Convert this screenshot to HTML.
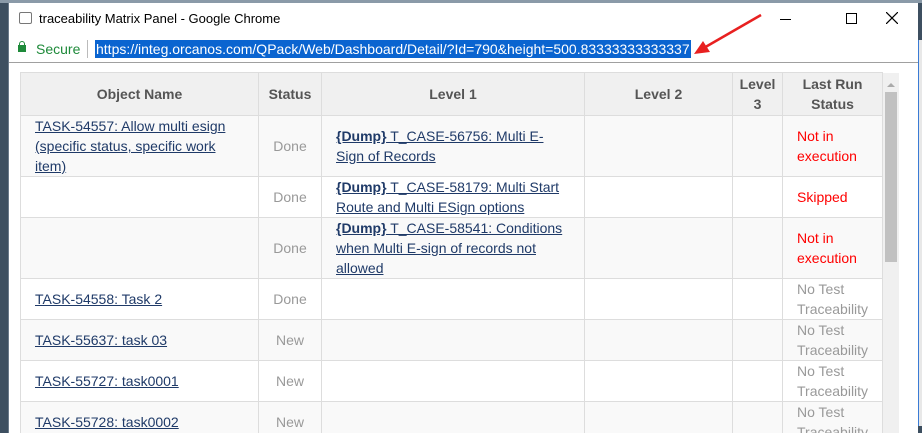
<!DOCTYPE html>
<html><head><style>
*{margin:0;padding:0;box-sizing:border-box}
body{width:922px;height:426px;overflow:hidden;background:#3d4f60;font-family:"Liberation Sans",Arial,sans-serif;position:relative}
.win{position:absolute;left:8px;top:3px;width:910px;height:430px;background:#fff;border-left:1px solid #6a7a8a;overflow:hidden}
.title{position:absolute;left:0;top:0;width:910px;height:32px;background:#fff;font-size:13px;color:#000}
.addr{position:absolute;left:0;top:32px;width:910px;height:28px;border-bottom:1px solid #a0a0a0;font-size:14px}
table{position:absolute;left:11px;top:69px;border-collapse:collapse;font-size:14px;table-layout:fixed}
td,th{border:1px solid #ddd;padding:0 14px;line-height:20px;vertical-align:middle}
th{background:#f0f0f0;color:#555;font-weight:bold;text-align:center;height:43px}
td.s{color:#999;text-align:center;padding:0}
a{color:#1f3a68;text-decoration:underline}
.r{color:#f00}.g{color:#999}
tr.o td{background:#f9f9f9}
</style></head><body>
<div style="position:absolute;left:0;top:0;width:922px;height:3px;background:#8a9aa8"></div>
<div style="position:absolute;left:918px;top:40px;width:4px;height:386px;background:#e8e8e8;border-left:1px solid #3a7bd5"></div>
<div class="win">
<div class="title">
<div style="position:absolute;left:10px;top:9px;width:13px;height:12px;border:1.5px solid #777;border-radius:2px"></div>
<div style="position:absolute;left:30px;top:8px">traceability Matrix Panel - Google Chrome</div>
<div style="position:absolute;left:771px;top:16px;width:11px;height:1px;background:#000"></div>
<div style="position:absolute;left:837px;top:10px;width:11px;height:11px;border:1px solid #000"></div>
<svg style="position:absolute;left:877px;top:9px" width="12" height="12"><path d="M0 0L12 12M12 0L0 12" stroke="#000" stroke-width="1.2"/></svg>
</div>
<div class="addr">
<div style="position:absolute;left:9px;top:10px;width:8px;height:7px;background:#1e8a3a"></div>
<div style="position:absolute;left:10px;top:6px;width:6px;height:6px;border:1.5px solid #1e8a3a;border-bottom:none;border-radius:3px 3px 0 0"></div>
<div style="position:absolute;left:27px;top:6px;color:#1e8a3a">Secure</div>
<div style="position:absolute;left:78px;top:5px;width:1px;height:18px;background:#bbb"></div>
<div style="position:absolute;left:86px;top:5px;background:#0a64d0;color:#fff;line-height:18px;padding:0 1px">https://integ.orcanos.com/QPack/Web/Dashboard/Detail/?Id=790&amp;height=500.83333333333337</div>
</div>
<div style="position:absolute;left:874px;top:70px;width:16px;height:360px;background:#f0f0f0"></div>
<div style="position:absolute;left:878px;top:76px;width:0;height:0;border:4px solid transparent;border-bottom:4px solid #aaa"></div>
<div style="position:absolute;left:876px;top:89px;width:12px;height:170px;background:#c1c1c1"></div>
<table>
<colgroup><col style="width:238px"><col style="width:63px"><col style="width:263px"><col style="width:148px"><col style="width:50px"><col style="width:100px"></colgroup>
<tr><th>Object Name</th><th style="padding:0">Status</th><th>Level 1</th><th>Level 2</th><th style="padding:0">Level<br>3</th><th style="padding:0">Last Run<br>Status</th></tr>
<tr class="o" style="height:61px"><td><a>TASK-54557: Allow multi esign (specific status, specific work item)</a></td><td class="s">Done</td><td><a><b>{Dump}</b> T_CASE-56756: Multi E-Sign of Records</a></td><td></td><td></td><td class="r">Not in execution</td></tr>
<tr style="height:40px"><td></td><td class="s">Done</td><td><a><b>{Dump}</b> T_CASE-58179: Multi Start Route and Multi ESign options</a></td><td></td><td></td><td class="r">Skipped</td></tr>
<tr class="o" style="height:61px"><td></td><td class="s">Done</td><td><a><b>{Dump}</b> T_CASE-58541: Conditions when Multi E-sign of records not allowed</a></td><td></td><td></td><td class="r">Not in execution</td></tr>
<tr style="height:40px"><td><a>TASK-54558: Task 2</a></td><td class="s">Done</td><td></td><td></td><td></td><td class="g">No Test Traceability</td></tr>
<tr class="o" style="height:40px"><td><a>TASK-55637: task 03</a></td><td class="s">New</td><td></td><td></td><td></td><td class="g">No Test Traceability</td></tr>
<tr style="height:40px"><td><a>TASK-55727: task0001</a></td><td class="s">New</td><td></td><td></td><td></td><td class="g">No Test Traceability</td></tr>
<tr class="o" style="height:40px"><td><a>TASK-55728: task0002</a></td><td class="s">New</td><td></td><td></td><td></td><td class="g">No Test Traceability</td></tr>
</table>
</div>
<svg style="position:absolute;left:690px;top:12px" width="75" height="48" viewBox="0 0 75 48"><path d="M71 3 L12 37" stroke="#e82020" stroke-width="2.5"/><path d="M4 42 L20 40 L13 29 Z" fill="#e82020"/></svg>
</body></html>
